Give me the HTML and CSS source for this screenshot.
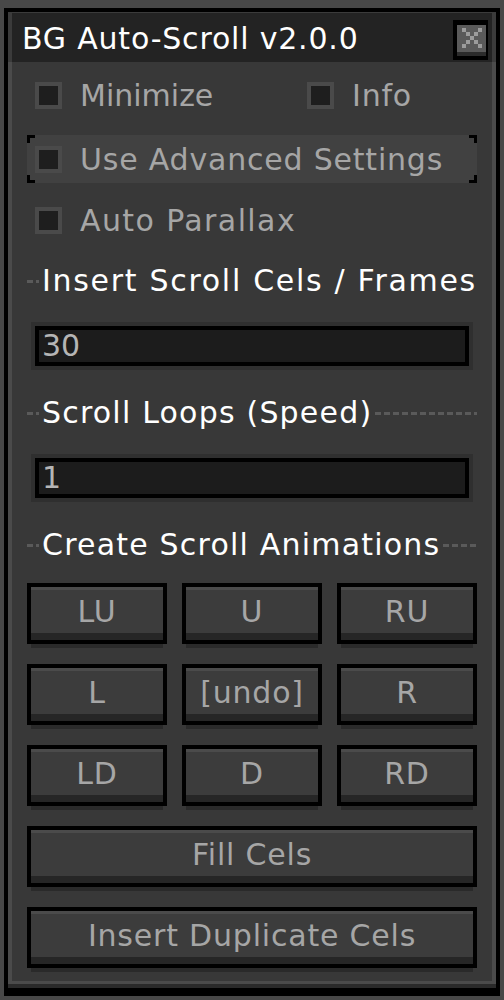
FILE: index.html
```html
<!DOCTYPE html>
<html>
<head>
<meta charset="utf-8">
<link rel="stylesheet" href="styles.css">
</head>
<body>
<div class="window">
  <div class="frame">
    <div class="titlebar">
      <span class="title">BG Auto-Scroll v2.0.0</span>
      <div class="close">
        <div class="close-face">
          <svg width="20" height="20" viewBox="0 0 20 20">
            <g fill="#9c9c9c">
              <rect x="0" y="0" width="4" height="4"/>
              <rect x="16" y="0" width="4" height="4"/>
              <rect x="4" y="4" width="4" height="4"/>
              <rect x="12" y="4" width="4" height="4"/>
              <rect x="8" y="8" width="4" height="4"/>
              <rect x="4" y="12" width="4" height="4"/>
              <rect x="12" y="12" width="4" height="4"/>
              <rect x="0" y="16" width="4" height="4"/>
              <rect x="16" y="16" width="4" height="4"/>
            </g>
          </svg>
        </div>
      </div>
    </div>
    <div class="body">
      <div class="row row-split">
        <label class="check"><span class="box"></span><span class="lbl lbl-tight">Minimize</span></label>
        <label class="check"><span class="box"></span><span class="lbl">Info</span></label>
      </div>
      <div class="row row-focus">
        <label class="check"><span class="box"></span><span class="lbl">Use Advanced Settings</span></label>
      </div>
      <div class="row row-third">
        <label class="check"><span class="box"></span><span class="lbl lbl-wide">Auto Parallax</span></label>
      </div>

      <div class="sep sep-first"><span class="sep-text sep-wide">Insert Scroll Cels / Frames</span></div>
      <div class="input"><div class="field">30</div></div>

      <div class="sep"><span class="sep-text">Scroll Loops (Speed)</span></div>
      <div class="input"><div class="field">1</div></div>

      <div class="sep"><span class="sep-text">Create Scroll Animations</span></div>

      <div class="buttons">
        <div class="btn">LU</div>
        <div class="btn">U</div>
        <div class="btn">RU</div>
        <div class="btn">L</div>
        <div class="btn">[undo]</div>
        <div class="btn">R</div>
        <div class="btn">LD</div>
        <div class="btn">D</div>
        <div class="btn">RD</div>
        <div class="btn btn-wide">Fill Cels</div>
        <div class="btn btn-wide">Insert Duplicate Cels</div>
      </div>
    </div>
  </div>
</div>
</body>
</html>
```

FILE: styles.css
```css
html, body {
  margin: 0;
  padding: 0;
  background: #484848;
}
body {
  width: 504px;
  height: 1000px;
  overflow: hidden;
  font-family: "DejaVu Sans", "Liberation Sans", sans-serif;
  font-size: 30px;
}
.window {
  margin: 8px 4px 0 4px;
  width: 496px;
  height: 988px;
  box-sizing: border-box;
  border: 4px solid #000;
  border-bottom-width: 8px;
  background: #000;
}
.frame {
  height: 972px;
  display: flex;
  flex-direction: column;
  box-shadow: 0 4px 0 #2a2a2a;
}
.titlebar {
  height: 50px;
  box-sizing: border-box;
  border-style: solid;
  border-color: #3b3b3b;
  border-width: 1px 4px 0 4px;
  background: #232323;
  display: flex;
  align-items: center;
  justify-content: space-between;
  padding: 0 4px 0 10px;
}
.title {
  color: #ffffff;
  letter-spacing: 0.8px;
  line-height: 30px;
  padding-top: 2px;
}
.close {
  width: 35px;
  height: 40px;
  box-sizing: border-box;
  background: #000;
  padding: 5px 2px 4px 4px;
  margin-top: 4px;
}
.close-face {
  height: 31px;
  box-sizing: border-box;
  background: #5a5a5a;
  border-bottom: 4px solid #2b2b2b;
  display: flex;
  align-items: center;
  justify-content: center;
}
.close-face svg {
  display: block;
  margin-top: -1px;
}
.body {
  flex: 1;
  background: #383838;
  border-style: solid;
  border-color: #4b4b4b;
  border-width: 0 4px 3px 4px;
  padding: 9px 15px 0 15px;
  display: flex;
  flex-direction: column;
}
.row {
  height: 48px;
  display: flex;
  align-items: center;
  padding-left: 8px;
}
.row-split {
  display: grid;
  grid-template-columns: 272px 1fr;
  align-items: center;
}
.row-focus {
  margin-top: 16px;
  background:
    linear-gradient(#000, #000) left top / 8px 3px no-repeat,
    linear-gradient(#000, #000) left top / 3px 8px no-repeat,
    linear-gradient(#000, #000) right top / 8px 3px no-repeat,
    linear-gradient(#000, #000) right top / 3px 8px no-repeat,
    linear-gradient(#000, #000) left bottom / 8px 3px no-repeat,
    linear-gradient(#000, #000) left bottom / 3px 8px no-repeat,
    linear-gradient(#000, #000) right bottom / 8px 3px no-repeat,
    linear-gradient(#000, #000) right bottom / 3px 8px no-repeat,
    #414141;
}
.row-third {
  margin-top: 13px;
}
.check {
  display: flex;
  align-items: center;
}
.box {
  width: 27px;
  height: 27px;
  box-sizing: border-box;
  border: 4px solid #4a4a4a;
  background: #1e1e1e;
  flex: none;
}
.lbl {
  margin-left: 18px;
  color: #a6a6a6;
  line-height: 30px;
  letter-spacing: 0.8px;
  padding-top: 2px;
}
.lbl-tight {
  letter-spacing: 0;
}
.lbl-wide {
  letter-spacing: 1.4px;
}
.sep {
  height: 30px;
  display: flex;
  align-items: center;
  margin-top: 28px;
}
.sep-first {
  margin-top: 22px;
}
.sep::before,
.sep::after {
  content: "";
  height: 3px;
  background: repeating-linear-gradient(90deg, #5a5a5a 0 6px, transparent 6px 9px);
}
.sep::before {
  width: 12px;
  flex: none;
}
.sep::after {
  flex: 1;
}
.sep-text {
  color: #ffffff;
  margin: 0 3px;
  line-height: 30px;
  letter-spacing: 1.2px;
  white-space: nowrap;
}
.sep-wide {
  letter-spacing: 1.7px;
}
.input {
  margin: 26px 4px 0 4px;
  height: 48px;
  box-sizing: border-box;
  border: 4px solid #2f2f2f;
}
.field {
  height: 100%;
  box-sizing: border-box;
  border: 4px solid #000;
  background: #1c1c1c;
  color: #b5b5b5;
  padding-left: 3px;
  display: flex;
  align-items: center;
  line-height: 30px;
}
.buttons {
  margin-top: 23px;
  display: grid;
  grid-template-columns: repeat(3, 140px);
  column-gap: 15px;
  row-gap: 20px;
}
.btn {
  height: 61px;
  box-sizing: border-box;
  border: 4px solid #000;
  background: linear-gradient(#4b4b4b 0 3px, #3c3c3c 3px calc(100% - 7px), #262626 calc(100% - 7px));
  box-shadow: 0 8px 0 -4px #2a2a2a;
  color: #a6a6a6;
  display: flex;
  align-items: center;
  justify-content: center;
  padding-bottom: 4px;
  line-height: 30px;
  letter-spacing: 0.8px;
}
.btn-wide {
  grid-column: 1 / -1;
}
```
